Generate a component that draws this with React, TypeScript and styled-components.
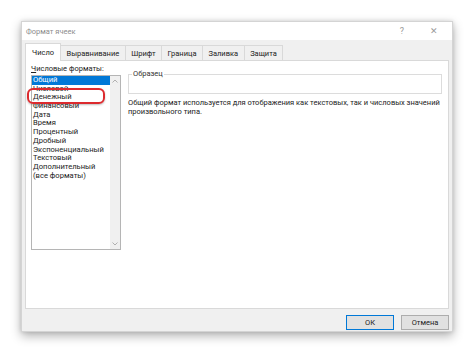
import React from "react";
import styled, { createGlobalStyle, css } from "styled-components";

const GlobalStyle = createGlobalStyle`
  body {
    margin: 0;
    background: #ffffff;
    font-family: Roboto, "Noto Sans", sans-serif;
  }
`;

const Screen = styled.div`
  width: 474px;
  height: 353px;
  overflow: hidden;
  padding: 21px 0 0 21px;
  box-sizing: border-box;
`;

const Dialog = styled.div`
  width: 432px;
  height: 311px;
  background: #f0f0f0;
  border: 1px solid #d4d4d4;
  box-sizing: border-box;
  box-shadow: 0 4px 10px rgba(0, 0, 0, 0.3), 0 0 4px rgba(0, 0, 0, 0.12);
  display: flex;
  flex-direction: column;
`;

const TitleBar = styled.div`
  height: 18px;
  background: #ffffff;
  display: flex;
  align-items: center;
  padding: 0 10px 0 4px;
  color: #8c8c8c;
  font-size: 7.5px;
`;

const Title = styled.div`
  flex: 1;
`;

const TitleButton = styled.div`
  width: 16px;
  text-align: center;
  color: #9a9a9a;
  font-size: 9px;
  margin-left: 16px;
`;

const TabStrip = styled.div`
  display: flex;
  align-items: flex-end;
  padding: 3px 0 0 3px;
  height: 17px;
`;

const Tab = styled.div<{ active?: boolean }>`
  height: 15px;
  padding: 0 5.5px;
  display: flex;
  align-items: center;
  font-size: 7.5px;
  color: #222;
  border: 1px solid #d9d9d9;
  border-bottom: none;
  border-left: none;
  box-sizing: border-box;
  ${(p) =>
    p.active &&
    css`
      height: 18px;
      background: #ffffff;
      border-left: 1px solid #d9d9d9;
      padding: 0 6px;
      margin-bottom: -1px;
      position: relative;
    `}
`;

const Panel = styled.div`
  margin: 0 3px;
  height: 249px;
  background: #ffffff;
  border: 1px solid #d9d9d9;
  box-sizing: border-box;
  display: flex;
  gap: 7px;
  padding: 3px 5px 0 5px;
`;

const LeftColumn = styled.div`
  width: 90px;
  display: flex;
  flex-direction: column;
`;

const Label = styled.div`
  font-size: 7.5px;
  color: #222;
  height: 10px;
  line-height: 10px;
  margin-bottom: 1px;
`;

const ListBox = styled.div`
  position: relative;
  height: 173px;
  border: 1px solid #b5b5b5;
  display: flex;
`;

const Items = styled.div`
  flex: 1;
`;

const Item = styled.div<{ selected?: boolean }>`
  font-size: 7.6px;
  height: 8.7px;
  line-height: 8.7px;
  padding-left: 1px;
  color: ${(p) => (p.selected ? "#ffffff" : "#222")};
  background: ${(p) => (p.selected ? "#0078d7" : "transparent")};
  white-space: nowrap;
`;

const ScrollBar = styled.div`
  width: 10px;
  background: #f0f0f0;
  display: flex;
  flex-direction: column;
  justify-content: space-between;
  align-items: center;
  padding: 3px 0;
`;

const Highlight = styled.div`
  position: absolute;
  left: -5px;
  top: 12px;
  width: 74px;
  height: 12px;
  border: 2px solid #dc2a2e;
  border-radius: 6px;
  box-shadow: 0 1px 2px rgba(0, 0, 0, 0.25);
`;

const RightColumn = styled.div`
  flex: 1;
  padding-top: 10px;
  padding-right: 1px;
`;

const GroupBox = styled.fieldset`
  margin: 0;
  height: 24px;
  box-sizing: border-box;
  border: 1px solid #dcdcdc;
  padding: 0;
  margin-top: -4px;
`;

const Legend = styled.legend`
  font-size: 7.5px;
  color: #333;
  padding: 0 1px;
  margin-left: 3px;
  line-height: 8px;
`;

const Description = styled.div`
  font-size: 7.5px;
  color: #222;
  line-height: 9px;
  margin-top: 4px;
`;

const Footer = styled.div`
  display: flex;
  justify-content: flex-end;
  gap: 7px;
  padding: 6px 3px 0 0;
`;

const Button = styled.div<{ primary?: boolean }>`
  width: 48px;
  height: 15px;
  box-sizing: border-box;
  background: #e1e1e1;
  border: 1px solid ${(p) => (p.primary ? "#0078d7" : "#adadad")};
  font-size: 7.5px;
  color: #222;
  display: flex;
  align-items: center;
  justify-content: center;
`;

const Chevron = ({ up }: { up?: boolean }) => (
  <svg width="6" height="4" viewBox="0 0 6 4">
    <path
      d={up ? "M0.5 3.5 L3 1 L5.5 3.5" : "M0.5 0.5 L3 3 L5.5 0.5"}
      fill="none"
      stroke="#a0a0a0"
      strokeWidth="0.8"
    />
  </svg>
);

const formats = [
  "Общий",
  "Числовой",
  "Денежный",
  "Финансовый",
  "Дата",
  "Время",
  "Процентный",
  "Дробный",
  "Экспоненциальный",
  "Текстовый",
  "Дополнительный",
  "(все форматы)",
];

const tabs = ["Число", "Выравнивание", "Шрифт", "Граница", "Заливка", "Защита"];

export default function App() {
  return (
    <Screen>
      <GlobalStyle />
      <Dialog>
        <TitleBar>
          <Title>Формат ячеек</Title>
          <TitleButton>?</TitleButton>
          <TitleButton>✕</TitleButton>
        </TitleBar>
        <TabStrip>
          {tabs.map((t, i) => (
            <Tab key={t} active={i === 0}>
              {t}
            </Tab>
          ))}
        </TabStrip>
        <Panel>
          <LeftColumn>
            <Label>
              <u>Ч</u>исловые форматы:
            </Label>
            <ListBox>
              <Items>
                {formats.map((f, i) => (
                  <Item key={f} selected={i === 0}>
                    {f}
                  </Item>
                ))}
              </Items>
              <ScrollBar>
                <Chevron up />
                <Chevron />
              </ScrollBar>
              <Highlight />
            </ListBox>
          </LeftColumn>
          <RightColumn>
            <GroupBox>
              <Legend>Образец</Legend>
            </GroupBox>
            <Description>
              Общий формат используется для отображения как текстовых, так и
              числовых значений произвольного типа.
            </Description>
          </RightColumn>
        </Panel>
        <Footer>
          <Button primary>ОК</Button>
          <Button>Отмена</Button>
        </Footer>
      </Dialog>
    </Screen>
  );
}
